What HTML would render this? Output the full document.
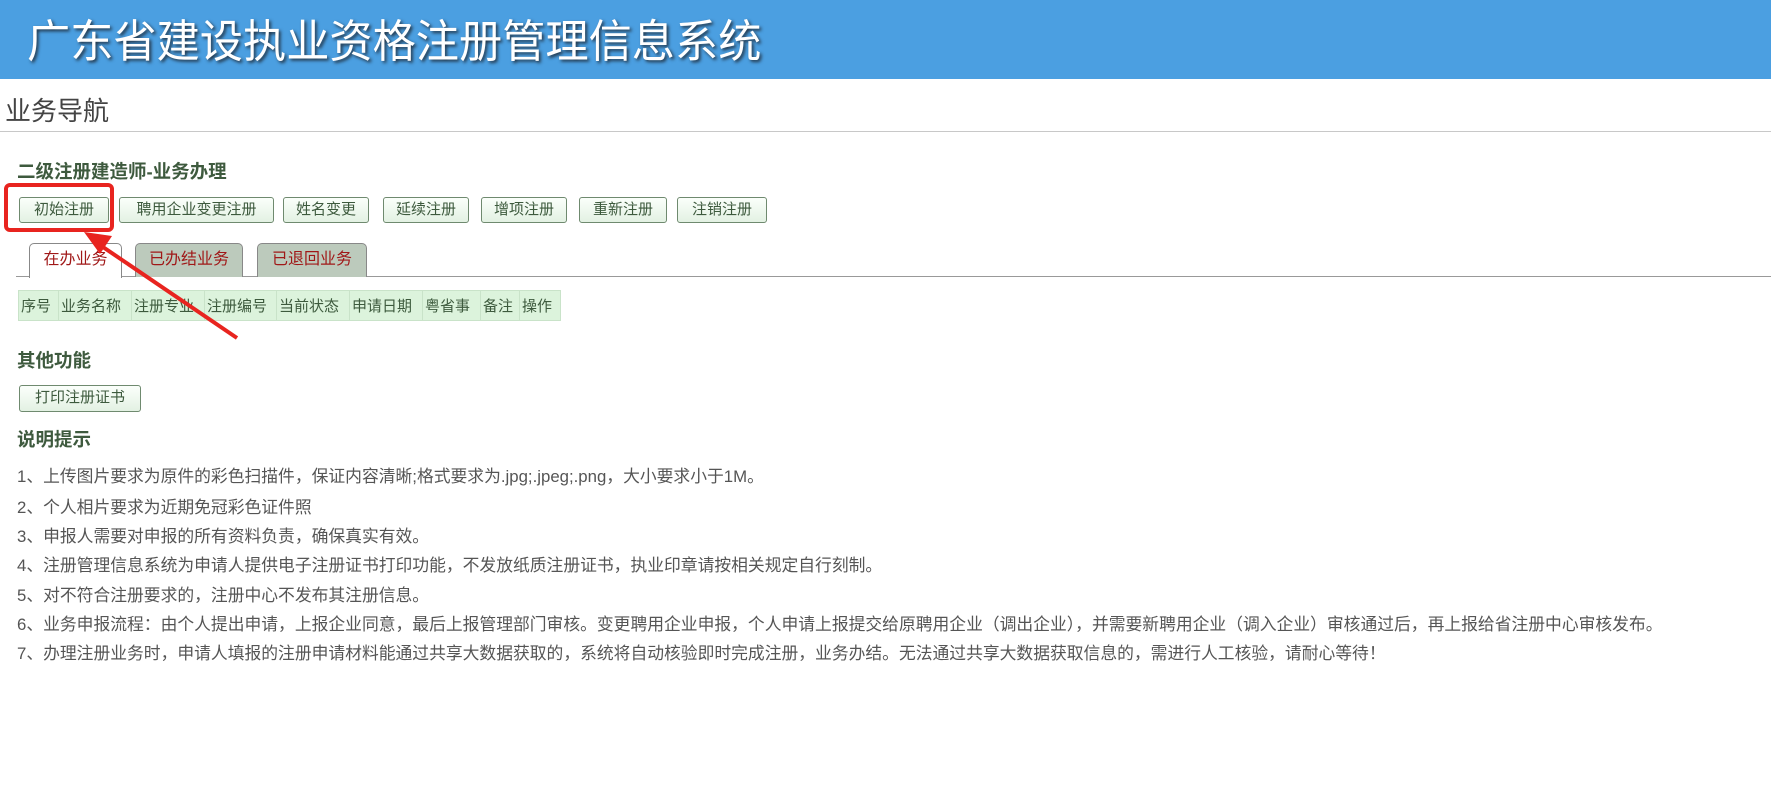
<!DOCTYPE html>
<html><head><meta charset="utf-8"><style>
*{margin:0;padding:0;box-sizing:border-box}
body{width:1771px;height:801px;background:#fff;font-family:"Liberation Sans","Noto Sans CJK SC",sans-serif;position:relative;overflow:hidden;color:#444}
.hdr{position:absolute;left:0;top:0;width:1771px;height:79px;background:#4b9fe1}
.hdr div{position:absolute;left:27px;top:5px;font-size:45px;color:#fff;letter-spacing:0;text-shadow:2px 2px 3px #234;font-weight:normal;white-space:nowrap;transform:scaleX(0.96);transform-origin:left}
.abs{position:absolute;white-space:nowrap}
.btn{position:absolute;top:197px;height:26px;border:1px solid #6f8a6f;border-radius:3px;background:linear-gradient(#fbfffb,#e3f1e3);font-size:15px;color:#3d5a3d;text-align:center;line-height:24px}
.h{font-weight:bold;font-size:18.5px;color:#3e5a3e}
.tab{position:absolute;top:243px;height:34px;border:1px solid #888;border-bottom:none;border-radius:5px 5px 0 0;font-size:16px;color:#a01818;text-align:center;line-height:32px}
table{position:absolute;left:18px;top:290px;border-collapse:collapse;height:31px}
td{border:1px solid #c9e3c9;background:#dcf3dc;font-size:15px;color:#3d5a3d;padding:0 2px;white-space:nowrap}
.p{position:absolute;left:17px;font-size:16.8px;color:#555;white-space:nowrap}
</style></head><body>
<div class="hdr"><div>广东省建设执业资格注册管理信息系统</div></div>
<div class="abs" style="left:5px;top:91px;font-size:26px;color:#444">业务导航</div>
<div class="abs" style="left:0;top:131px;width:1771px;height:1px;background:#c8c8c8"></div>
<div class="abs h" style="left:17px;top:158px">二级注册建造师-业务办理</div>
<div class="btn" style="left:19px;width:90px">初始注册</div>
<div class="btn" style="left:119px;width:155px">聘用企业变更注册</div>
<div class="btn" style="left:283px;width:86px">姓名变更</div>
<div class="btn" style="left:383px;width:86px">延续注册</div>
<div class="btn" style="left:481px;width:86px">增项注册</div>
<div class="btn" style="left:579px;width:88px">重新注册</div>
<div class="btn" style="left:677px;width:90px">注销注册</div>
<div class="abs" style="left:16px;top:276px;width:1755px;height:1px;background:#999"></div>
<div class="tab" style="left:29px;width:93px;background:#fff;height:35px">在办业务</div>
<div class="tab" style="left:135px;width:108px;background:#bccabc">已办结业务</div>
<div class="tab" style="left:257px;width:110px;background:#bccabc">已退回业务</div>
<table><tr><td style="width:40px">序号</td><td style="width:73px">业务名称</td><td style="width:73px">注册专业</td><td style="width:72px">注册编号</td><td style="width:73px">当前状态</td><td style="width:73px">申请日期</td><td style="width:58px">粤省事</td><td style="width:39px">备注</td><td style="width:41px">操作</td></tr></table>
<div class="abs h" style="left:17px;top:347px">其他功能</div>
<div class="btn" style="left:19px;top:385px;width:122px;height:27px">打印注册证书</div>
<div class="abs h" style="left:17px;top:426px">说明提示</div>
<div class="p" style="top:463px">1、上传图片要求为原件的彩色扫描件，保证内容清晰;格式要求为.jpg;.jpeg;.png，大小要求小于1M。</div>
<div class="p" style="top:494px">2、个人相片要求为近期免冠彩色证件照</div>
<div class="p" style="top:523px">3、申报人需要对申报的所有资料负责，确保真实有效。</div>
<div class="p" style="top:552px">4、注册管理信息系统为申请人提供电子注册证书打印功能，不发放纸质注册证书，执业印章请按相关规定自行刻制。</div>
<div class="p" style="top:582px">5、对不符合注册要求的，注册中心不发布其注册信息。</div>
<div class="p" style="top:611px">6、业务申报流程：由个人提出申请，上报企业同意，最后上报管理部门审核。变更聘用企业申报，个人申请上报提交给原聘用企业（调出企业），并需要新聘用企业（调入企业）审核通过后，再上报给省注册中心审核发布。</div>
<div class="p" style="top:640px">7、办理注册业务时，申请人填报的注册申请材料能通过共享大数据获取的，系统将自动核验即时完成注册，业务办结。无法通过共享大数据获取信息的，需进行人工核验，请耐心等待！</div>
<div class="abs" style="left:4px;top:183px;width:110px;height:49px;border:4px solid #e8241f;border-radius:6px"></div>
<svg class="abs" style="left:0;top:0" width="300" height="360"><line x1="237" y1="338" x2="100" y2="245" stroke="#e8241f" stroke-width="4"/><polygon points="84,232 112,236 100,254" fill="#e8241f"/></svg>
</body></html>
